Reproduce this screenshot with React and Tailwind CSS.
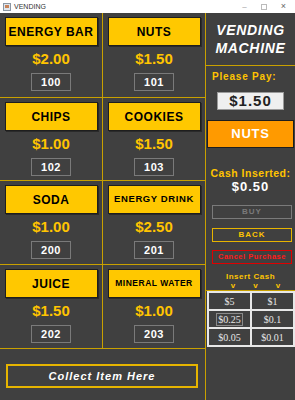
import React from 'react';

const items = [
	{ name: 'ENERGY BAR', price: '$2.00', code: '100', nameClass: 'text-[12px] tracking-[0.5px]' },
	{ name: 'NUTS', price: '$1.50', code: '101', nameClass: 'text-[12px] tracking-[0.5px]' },
	{ name: 'CHIPS', price: '$1.00', code: '102', nameClass: 'text-[12px] tracking-[0.5px]' },
	{ name: 'COOKIES', price: '$1.50', code: '103', nameClass: 'text-[12px] tracking-[0.5px]' },
	{ name: 'SODA', price: '$1.00', code: '200', nameClass: 'text-[12px] tracking-[0.5px]' },
	{ name: 'ENERGY DRINK', price: '$2.50', code: '201', nameClass: 'text-[9.5px] tracking-[0.6px]' },
	{ name: 'JUICE', price: '$1.50', code: '202', nameClass: 'text-[12px] tracking-[0.5px]' },
	{ name: 'MINERAL WATER', price: '$1.00', code: '203', nameClass: 'text-[8.5px] tracking-[0.5px]' },
];

const coins = ['$5', '$1', '$0.25', '$0.1', '$0.05', '$0.01'];

const ItemCell = ({ item, left }) => (
	<div
		className={`flex flex-col items-center border-b border-[#c8a000] pt-[4px] ${left ? 'border-r' : ''}`}
	>
		<div className="flex h-[29px] w-[93px] items-center justify-center border border-[#1e1e1e] bg-[#ffc800] shadow-[1px_1px_0_#2a2a2a]">
			<span className={`font-bold text-black ${item.nameClass}`}>{item.name}</span>
		</div>
		<div className="mt-[4px] h-[18px] text-[15px] font-bold leading-[18px] text-[#ffc400]">{item.price}</div>
		<div className="mt-[5px] flex h-[18px] w-[40px] items-center justify-center border border-[#7a7a7a] text-[11px] font-bold tracking-[0.5px] text-white">
			{item.code}
		</div>
	</div>
);

export default function App() {
	return (
		<div className="flex h-[400px] w-[295px] flex-col overflow-hidden font-['Liberation_Sans',Arial,sans-serif]">
			{/* window title bar */}
			<div className="flex h-[13px] items-center bg-white">
				<svg className="ml-[3px] h-[8px] w-[8px]" viewBox="0 0 8 8">
					<rect x="0.5" y="0.5" width="7" height="7" fill="#dfe6ee" stroke="#8a96a3" />
					<rect x="2" y="2" width="4" height="3" fill="#c7835a" />
				</svg>
				<span className="ml-[3px] text-[7px] leading-none text-[#333]">VENDING</span>
				<div className="ml-auto flex items-center gap-[14px] pr-[9px] text-[#999]">
					<span className="text-[8px] leading-none">&#8211;</span>
					<span className="h-[6px] w-[6px] border border-[#bbb]"></span>
					<span className="text-[9px] leading-none text-[#666]">&#215;</span>
				</div>
			</div>

			<div className="flex flex-1 bg-[#404040]">
				{/* product area */}
				<div className="flex w-[205px] flex-col">
					<div className="grid grid-cols-[103px_102px] grid-rows-[85px_83px_84px_84px]">
						{items.map((item, i) => (
							<ItemCell key={item.code} item={item} left={i % 2 === 0} />
						))}
					</div>
					<div className="flex-1">
						<div className="ml-[6px] mt-[15px] flex h-[24px] w-[192px] items-center justify-center border-2 border-[#e6b400]">
							<span className="text-[11px] font-bold italic tracking-[1px] text-white">Collect Item Here</span>
						</div>
					</div>
				</div>

				{/* control panel */}
				<div className="flex flex-1 flex-col border-l border-[#c8a000]">
					<div className="flex h-[53px] flex-col items-center justify-center border-b border-[#c8a000] text-[14px] font-bold italic leading-[18px] tracking-[0.7px] text-white">
						<span>VENDING</span>
						<span>MACHINE</span>
					</div>
					<div className="mt-[5px] pl-[6px] text-[10px] font-bold leading-[12px] tracking-[0.8px] text-[#ffc400]">
						Please Pay:
					</div>
					<div className="mx-auto mt-[9px] flex h-[18px] w-[67px] items-center justify-center border border-[#9a9a9a] bg-[#efefef] text-[15px] font-bold tracking-[1px] text-[#222]">
						$1.50
					</div>
					<div className="ml-[1px] mt-[10px] flex h-[28px] w-[87px] items-center justify-center border border-[#1e1e1e] bg-[#ff9a00] text-[13px] font-bold tracking-[0.8px] text-white">
						NUTS
					</div>
					<div className="mt-[19px] text-center text-[10.5px] font-bold leading-[12px] tracking-[0.5px] text-[#ffc400]">
						Cash Inserted:
					</div>
					<div className="mt-[1px] text-center text-[13px] font-bold leading-[14px] tracking-[1px] text-white">
						$0.50
					</div>
					<div className="ml-[6px] mt-[11px] flex h-[14px] w-[80px] items-center justify-center border-[1.5px] border-[#7a7a7a] text-[8px] font-bold tracking-[1px] text-[#7a7a7a]">
						BUY
					</div>
					<div className="ml-[6px] mt-[9px] flex h-[14px] w-[80px] items-center justify-center border-[1.5px] border-[#e6b400] text-[8px] font-bold tracking-[1px] text-[#ffc400]">
						BACK
					</div>
					<div className="ml-[6px] mt-[8px] flex h-[14px] w-[80px] items-center justify-center border-[1.5px] border-[#e00000] text-[7.5px] font-bold tracking-[0.5px] text-[#ff1a1a]">
						Cancel Purchase
					</div>
					<div className="mt-[8px] text-center text-[8px] font-bold leading-[10px] tracking-[0.5px] text-[#ffc400]">
						Insert Cash
					</div>
					<div className="flex h-[8px] justify-center gap-[18px] pl-[10px] text-[8px] font-bold leading-[7px] text-[#ffc400]">
						<span>v</span>
						<span>v</span>
						<span>v</span>
					</div>
					<div className="border-t border-[#c8a000]"></div>
					<div className="ml-[1px] grid grid-cols-2 gap-[2px] bg-[#e8e8e8] p-[2px]">
						{coins.map((c) => (
							<div
								key={c}
								className="flex h-[16px] items-center justify-center bg-[#404040] font-['Liberation_Serif',serif] text-[10px] text-[#e6e6e6]"
							>
								<span className={c === '$0.25' ? 'border border-[#8a8a8a] px-[1px] leading-[11px]' : ''}>{c}</span>
							</div>
						))}
					</div>
				</div>
			</div>
		</div>
	);
}
